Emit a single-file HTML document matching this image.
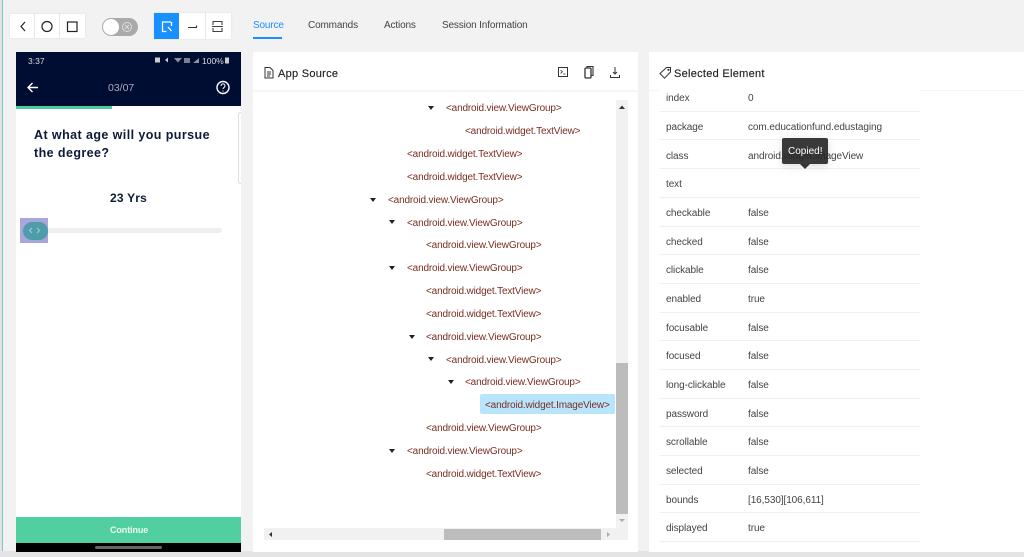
<!DOCTYPE html>
<html><head><meta charset="utf-8"><style>
*{box-sizing:border-box}
html,body{margin:0;padding:0}
body{width:1024px;height:557px;overflow:hidden;background:#f2f2f2;position:relative;font-family:"Liberation Sans",sans-serif;font-size:10px;color:#333}
.a{position:absolute}
.t{position:absolute;white-space:nowrap;line-height:14px}
.tree{color:#7a2e22;font-size:10px;letter-spacing:-.16px}
.tree .t{margin-top:2px}
.tri{position:absolute;margin-top:1px;width:0;height:0;border-left:3.5px solid transparent;border-right:3.5px solid transparent;border-top:4px solid #222}
.line{position:absolute;left:659px;width:261px;height:1px;background:#f1f1f1}
.k,.v{margin-top:2px;color:#444;letter-spacing:-.08px}
.k{left:666px}.v{left:748px}
.tab{position:absolute;top:19px;font-size:10px;color:#444;line-height:14px;white-space:nowrap;letter-spacing:-.15px}
svg{position:absolute;overflow:visible}
.mont{font-family:"Liberation Sans",sans-serif;font-weight:700;color:#0d1a38}
.title{font-size:11px;color:#222;letter-spacing:.28px;-webkit-text-stroke:.15px #222}
</style></head><body>
<div class="a" style="left:0;top:0;width:3px;height:557px;background:#e4e4e4"></div>
<div class="a" style="left:2px;top:0;width:1px;height:557px;background:#6fc9cf"></div>
<div class="a" style="left:0;top:551px;width:1024px;height:6px;background:#e4e4e4"></div>

<!-- toolbar -->
<div class="a" style="left:10px;top:14px;width:75px;height:24px;background:#fff;box-shadow:0 0 2px #ddd"></div>
<div class="a" style="left:34px;top:14px;width:1px;height:24px;background:#e6e6e6"></div>
<div class="a" style="left:59px;top:14px;width:1px;height:24px;background:#e6e6e6"></div>
<svg style="left:0;top:0" width="100" height="50" fill="none" stroke="#222" stroke-width="1.2"><path d="M25 22l-4 4.500 4 4.500"/><circle cx="47" cy="26.500" r="5"/><rect x="67.500" y="22" width="9.500" height="9.500"/></svg>

<div class="a" style="left:102px;top:18px;width:36px;height:18px;border-radius:9px;background:#aaa"></div>
<div class="a" style="left:103px;top:19px;width:16px;height:16px;border-radius:8px;background:#fff"></div>
<svg style="left:0;top:0" width="140" height="50" fill="none" stroke="#ddd" stroke-width="1"><circle cx="127" cy="27" r="4.500"/><path d="M125 25l4 4M129 25l-4 4"/></svg>

<div class="a" style="left:154px;top:13px;width:77px;height:26px;background:#fff;box-shadow:0 0 2px #ddd"></div>
<div class="a" style="left:154px;top:13px;width:25px;height:26px;background:#1890ff"></div>
<div class="a" style="left:205px;top:13px;width:1px;height:26px;background:#e6e6e6"></div>
<svg style="left:0;top:0" width="240" height="50" fill="none"><path d="M171 22h-8.500v9.500h4" stroke="#fff" stroke-width="1.300"/><path d="M171.500 22v4M168 27l3.500 4" stroke="#fff" stroke-width="1.300"/><path d="M188 27.500h8.500v-2" stroke="#333" stroke-width="1.100"/><path d="M213 25v-3.500h9v3.500M213 28v3.500h9v-3.500" stroke="#444" stroke-width="1.100"/><path d="M212 26.500h11" stroke="#444" stroke-width="1.100"/></svg>

<!-- tabs -->
<div class="tab" style="left:253px;color:#1890ff">Source</div>
<div class="a" style="left:253px;top:37px;width:29px;height:2px;background:#1890ff"></div>
<div class="tab" style="left:308px">Commands</div>
<div class="tab" style="left:384px">Actions</div>
<div class="tab" style="left:442px">Session Information</div>

<!-- device -->
<div class="a" style="left:16px;top:52px;width:225px;height:499px;background:#fff"></div>
<div class="a" style="left:16px;top:52px;width:225px;height:54px;background:#000d33"></div>
<div class="t" style="left:28px;top:54px;font-size:8.500px;color:#ddd">3:37</div>
<div class="t" style="left:202px;top:54px;font-size:8.500px;color:#ddd">100%</div>
<svg style="left:0;top:0" width="240" height="110" fill="#ccc"><rect x="155" y="57.500" width="5" height="5"/><path d="M165 60l3-2.500v5z"/><path d="M174 58h8l-4 4.500z" opacity=".7"/><rect x="184" y="58" width="6" height="5" opacity=".6"/><path d="M193 63l6-5v5z" opacity=".7"/><rect x="225" y="57.500" width="4" height="6"/></svg>
<svg style="left:0;top:0" width="240" height="110" fill="none" stroke="#fff" stroke-width="1.400"><path d="M38 87.500H28M32.500 83l-4.500 4.500 4.500 4.500"/><circle cx="223" cy="87.500" r="6"/><path d="M221 86c0-2.800 4-2.800 4 0 0 1.500-2 1.500-2 3M223 90.500v1" stroke-width="1"/></svg>
<div class="t" style="left:108px;top:81px;font-size:10.500px;color:#aab">03/07</div>
<div class="a" style="left:16px;top:106px;width:96px;height:3px;background:#4ecb9d"></div>
<div class="a" style="left:238px;top:112px;width:3px;height:72px;border:1px solid #ddd;border-right:0;border-radius:3px 0 0 3px"></div>

<div class="t mont" style="left:34px;top:126px;font-size:12.500px;line-height:18px;letter-spacing:.42px">At what age will you pursue<br>the degree?</div>
<div class="t mont" style="left:110px;top:191px;font-size:12px;letter-spacing:.2px">23 Yrs</div>

<div class="a" style="left:40px;top:228px;width:182px;height:5px;border-radius:3px;background:#eee"></div>
<div class="a" style="left:20px;top:218px;width:28px;height:25px;background:#a9a6dc"></div>
<div class="a" style="left:23px;top:222px;width:25px;height:18px;border-radius:9px;background:#4f9dab"></div>
<svg style="left:0;top:0" width="60" height="240" fill="none" stroke="#a9c9d6" stroke-width="1"><path d="M32 228l-2.500 2.500 2.500 2.500M37 228l2.500 2.500-2.500 2.500"/></svg>

<div class="a" style="left:16px;top:517px;width:225px;height:26px;background:#52cfa0"></div>
<div class="t" style="left:110px;top:523px;font-size:9px;font-weight:700;color:#eafaf4;letter-spacing:-.1px">Continue</div>
<div class="a" style="left:16px;top:543px;width:225px;height:9px;background:#000"></div>
<div class="a" style="left:95px;top:546px;width:67px;height:3px;border-radius:2px;background:#666"></div>

<!-- source panel -->
<div class="a" style="left:253px;top:52px;width:385px;height:500px;background:#fff"></div>
<div class="a" style="left:253px;top:90px;width:385px;height:2px;background:#f5f5f5"></div>
<svg style="left:0;top:0" width="640" height="90" fill="none" stroke="#333" stroke-width="1"><path d="M265 67.500h5l3 3v7.500h-8zM267 72h4M267 74h4M267 76h3"/><rect x="558.500" y="67.500" width="9" height="9"/><path d="M560.500 70l2 1.700-2 1.700M563 74h2.500" stroke-width=".8"/><rect x="585" y="68" width="6" height="10" rx="1" stroke-width="1.300"/><path d="M587 68v-1.500h6v9h-2" stroke-width="1.100"/><path d="M615 67v7M613 72l2 2 2-2M610.500 75v2.500h9V75" stroke-width="1"/></svg>
<div class="t title" style="left:278px;top:67px">App Source</div>

<div class="tree">
<div class="tri" style="left:428px;top:105px"></div><div class="t" style="left:446px;top:100px">&lt;android.view.ViewGroup&gt;</div>
<div class="t" style="left:465px;top:123px">&lt;android.widget.TextView&gt;</div>
<div class="t" style="left:407px;top:146px">&lt;android.widget.TextView&gt;</div>
<div class="t" style="left:407px;top:169px">&lt;android.widget.TextView&gt;</div>
<div class="tri" style="left:370px;top:197px"></div><div class="t" style="left:388px;top:192px">&lt;android.view.ViewGroup&gt;</div>
<div class="tri" style="left:389px;top:219px"></div><div class="t" style="left:407px;top:215px">&lt;android.view.ViewGroup&gt;</div>
<div class="t" style="left:426px;top:237px">&lt;android.view.ViewGroup&gt;</div>
<div class="tri" style="left:389px;top:265px"></div><div class="t" style="left:407px;top:260px">&lt;android.view.ViewGroup&gt;</div>
<div class="t" style="left:426px;top:283px">&lt;android.widget.TextView&gt;</div>
<div class="t" style="left:426px;top:306px">&lt;android.widget.TextView&gt;</div>
<div class="tri" style="left:409px;top:334px"></div><div class="t" style="left:426px;top:329px">&lt;android.view.ViewGroup&gt;</div>
<div class="tri" style="left:428px;top:356px"></div><div class="t" style="left:446px;top:352px">&lt;android.view.ViewGroup&gt;</div>
<div class="tri" style="left:448px;top:379px"></div><div class="t" style="left:465px;top:374px">&lt;android.view.ViewGroup&gt;</div>
<div class="a" style="left:480px;top:394px;width:135px;height:20px;background:#b9e5fc;border-radius:2px"></div>
<div class="t" style="left:485px;top:397px">&lt;android.widget.ImageView&gt;</div>
<div class="t" style="left:426px;top:420px">&lt;android.view.ViewGroup&gt;</div>
<div class="tri" style="left:389px;top:448px"></div><div class="t" style="left:407px;top:443px">&lt;android.view.ViewGroup&gt;</div>
<div class="t" style="left:426px;top:466px">&lt;android.widget.TextView&gt;</div>
</div>

<!-- scrollbars -->
<div class="a" style="left:616px;top:100px;width:12px;height:428px;background:#f1f1f1"></div>
<div class="a" style="left:616px;top:363px;width:12px;height:151px;background:#bcbcbc"></div>
<div class="a" style="left:264px;top:528px;width:364px;height:12px;background:#f1f1f1"></div>
<div class="a" style="left:444px;top:529px;width:157px;height:11px;background:#bcbcbc"></div>
<svg style="left:0;top:0" width="640" height="545"><path d="M619 109l3-3.500 3 3.500z" fill="#333"/><path d="M619 519l3 3 3-3z" fill="#aaa"/><path d="M272 532l-3 2.500 3 2.500z" fill="#333"/><path d="M607 532l3 2.500-3 2.500z" fill="#aaa"/></svg>

<!-- selected panel -->
<div class="a" style="left:649px;top:52px;width:375px;height:500px;background:#fff"></div>
<div class="a" style="left:649px;top:90px;width:375px;height:1px;background:#f5f5f5"></div>
<div class="a" style="left:659px;top:89px;width:261px;height:3px;background:#fff"></div>
<svg style="left:0;top:0" width="680" height="90" fill="none" stroke="#333" stroke-width="1"><path d="M660 73.500l6.500-6h4v4.500l-6 6.200z"/><circle cx="668.500" cy="69.800" r=".6"/></svg>
<div class="t title" style="left:674px;top:67px">Selected Element</div>

<div class="t k" style="top:90px">index</div><div class="t v" style="top:90px">0</div><div class="line" style="top:111px"></div>
<div class="t k" style="top:119px">package</div><div class="t v" style="top:119px">com.educationfund.edustaging</div><div class="line" style="top:139px"></div>
<div class="t k" style="top:148px">class</div><div class="t v" style="top:148px">android.widget.ImageView</div><div class="line" style="top:168px"></div>
<div class="t k" style="top:176px">text</div><div class="line" style="top:197px"></div>
<div class="t k" style="top:205px">checkable</div><div class="t v" style="top:205px">false</div><div class="line" style="top:226px"></div>
<div class="t k" style="top:234px">checked</div><div class="t v" style="top:234px">false</div><div class="line" style="top:254px"></div>
<div class="t k" style="top:262px">clickable</div><div class="t v" style="top:262px">false</div><div class="line" style="top:283px"></div>
<div class="t k" style="top:291px">enabled</div><div class="t v" style="top:291px">true</div><div class="line" style="top:312px"></div>
<div class="t k" style="top:320px">focusable</div><div class="t v" style="top:320px">false</div><div class="line" style="top:340px"></div>
<div class="t k" style="top:348px">focused</div><div class="t v" style="top:348px">false</div><div class="line" style="top:369px"></div>
<div class="t k" style="top:377px">long-clickable</div><div class="t v" style="top:377px">false</div><div class="line" style="top:398px"></div>
<div class="t k" style="top:406px">password</div><div class="t v" style="top:406px">false</div><div class="line" style="top:426px"></div>
<div class="t k" style="top:434px">scrollable</div><div class="t v" style="top:434px">false</div><div class="line" style="top:455px"></div>
<div class="t k" style="top:463px">selected</div><div class="t v" style="top:463px">false</div><div class="line" style="top:484px"></div>
<div class="t k" style="top:492px">bounds</div><div class="t v" style="top:492px">[16,530][106,611]</div><div class="line" style="top:512px"></div>
<div class="t k" style="top:520px">displayed</div><div class="t v" style="top:520px">true</div><div class="line" style="top:541px"></div>

<!-- tooltip -->
<div class="a" style="left:782px;top:138px;width:46px;height:26px;background:rgba(40,40,40,.92);border-radius:2px;box-shadow:0 2px 8px rgba(0,0,0,.15)"></div>
<div class="a" style="left:800px;top:164px;width:0;height:0;border-left:5px solid transparent;border-right:5px solid transparent;border-top:5px solid #333"></div>
<div class="t" style="left:788px;top:145px;color:#fff;font-size:10px">Copied!</div>
</body></html>
